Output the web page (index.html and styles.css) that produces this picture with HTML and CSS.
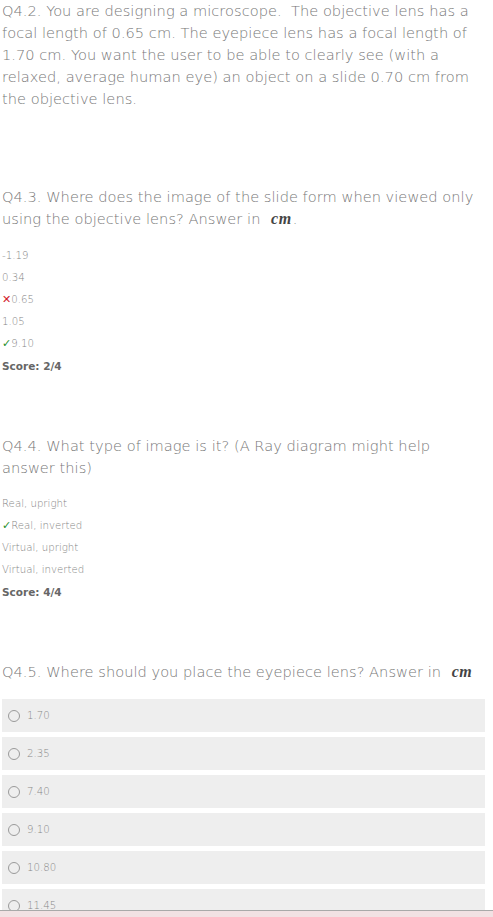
FILE: index.html
```html
<!DOCTYPE html>
<html>
<head>
<meta charset="utf-8">
<link rel="stylesheet" href="styles.css">
</head>
<body>
<div class="page">
  <section class="q q-intro">
    <p class="qtext">Q4.2. You are designing a microscope.&nbsp; The objective lens has a focal length of 0.65 cm. The eyepiece lens has a focal length of 1.70 cm. You want the user to be able to clearly see (with a relaxed, average human eye) an object on a slide 0.70 cm from the objective lens.</p>
  </section>

  <section class="q q-first">
    <p class="qtext">Q4.3. Where does the image of the slide form when viewed only using the objective lens? Answer in <span class="math">cm</span>.</p>
    <ul class="answers">
      <li>-1.19</li>
      <li>0.34</li>
      <li><span class="mark wrong">✕</span>0.65</li>
      <li>1.05</li>
      <li><span class="mark right">✓</span>9.10</li>
    </ul>
    <p class="score">Score: 2/4</p>
  </section>

  <section class="q q-compact">
    <p class="qtext">Q4.4. What type of image is it? (A Ray diagram might help answer this)</p>
    <ul class="answers">
      <li>Real, upright</li>
      <li><span class="mark right">✓</span>Real, inverted</li>
      <li>Virtual, upright</li>
      <li>Virtual, inverted</li>
    </ul>
    <p class="score">Score: 4/4</p>
  </section>

  <section class="q">
    <p class="qtext">Q4.5. Where should you place the eyepiece lens? Answer in <span class="math">cm</span></p>
    <div class="choices">
      <label class="choice"><span class="radio"></span>1.70</label>
      <label class="choice"><span class="radio"></span>2.35</label>
      <label class="choice"><span class="radio"></span>7.40</label>
      <label class="choice"><span class="radio"></span>9.10</label>
      <label class="choice"><span class="radio"></span>10.80</label>
      <label class="choice"><span class="radio"></span>11.45</label>
    </div>
  </section>
</div>
<div class="bottom-bar"></div>
</body>
</html>
```
FILE: styles.css
```css
html, body {
  margin: 0;
  padding: 0;
  background: #ffffff;
}
body {
  font-family: "DejaVu Sans", "Noto Sans", sans-serif;
  color: #808080;
}
.page {
  padding: 0 8px 40px 2px;
}
.q {
  margin-top: 58px;
}
.q-first {
  margin-top: 76px;
}
.q-intro {
  margin-top: 0;
}
.qtext {
  margin: 0;
  font-size: 14.6px;
  line-height: 22px;
  font-weight: 200;
  letter-spacing: 0.03px;
  color: #777777;
}
.math {
  font-family: "Liberation Serif", "DejaVu Serif", serif;
  font-style: italic;
  font-weight: bold;
  font-size: 16px;
  line-height: 0;
  letter-spacing: 0.5px;
  color: #444;
  padding-left: 6px;
  margin-right: 1px;
}
.answers {
  list-style: none;
  margin: 15px 0 0;
  padding: 0;
}
.q-compact .answers {
  margin-top: 14px;
}
.answers li {
  font-size: 10.2px;
  line-height: 22px;
  color: #858585;
  font-weight: 200;
}
.mark {
  font-size: 11px;
  line-height: 0;
}
.mark.wrong { color: #d2202a; font-weight: bold; }
.mark.right { color: #1f8f2a; font-weight: bold; }
.score {
  margin: 0;
  font-size: 10.5px;
  line-height: 22px;
  font-weight: bold;
  color: #666;
}
.choices {
  margin-top: 16px;
  display: flex;
  flex-direction: column;
  gap: 5px;
}
.choice {
  display: flex;
  align-items: center;
  gap: 7px;
  height: 33px;
  padding-left: 6px;
  background: #eeeeee;
  font-size: 10.2px;
  font-weight: 200;
  color: #888;
}
.radio {
  width: 12px;
  height: 12px;
  border: 1px solid #9a9a9a;
  border-radius: 50%;
  box-sizing: border-box;
}
.bottom-bar {
  position: fixed;
  left: 0;
  right: 0;
  bottom: 0;
  height: 6px;
  border-top: 1px solid #a9a9a9;
  background: #f2e1e3;
}
```
